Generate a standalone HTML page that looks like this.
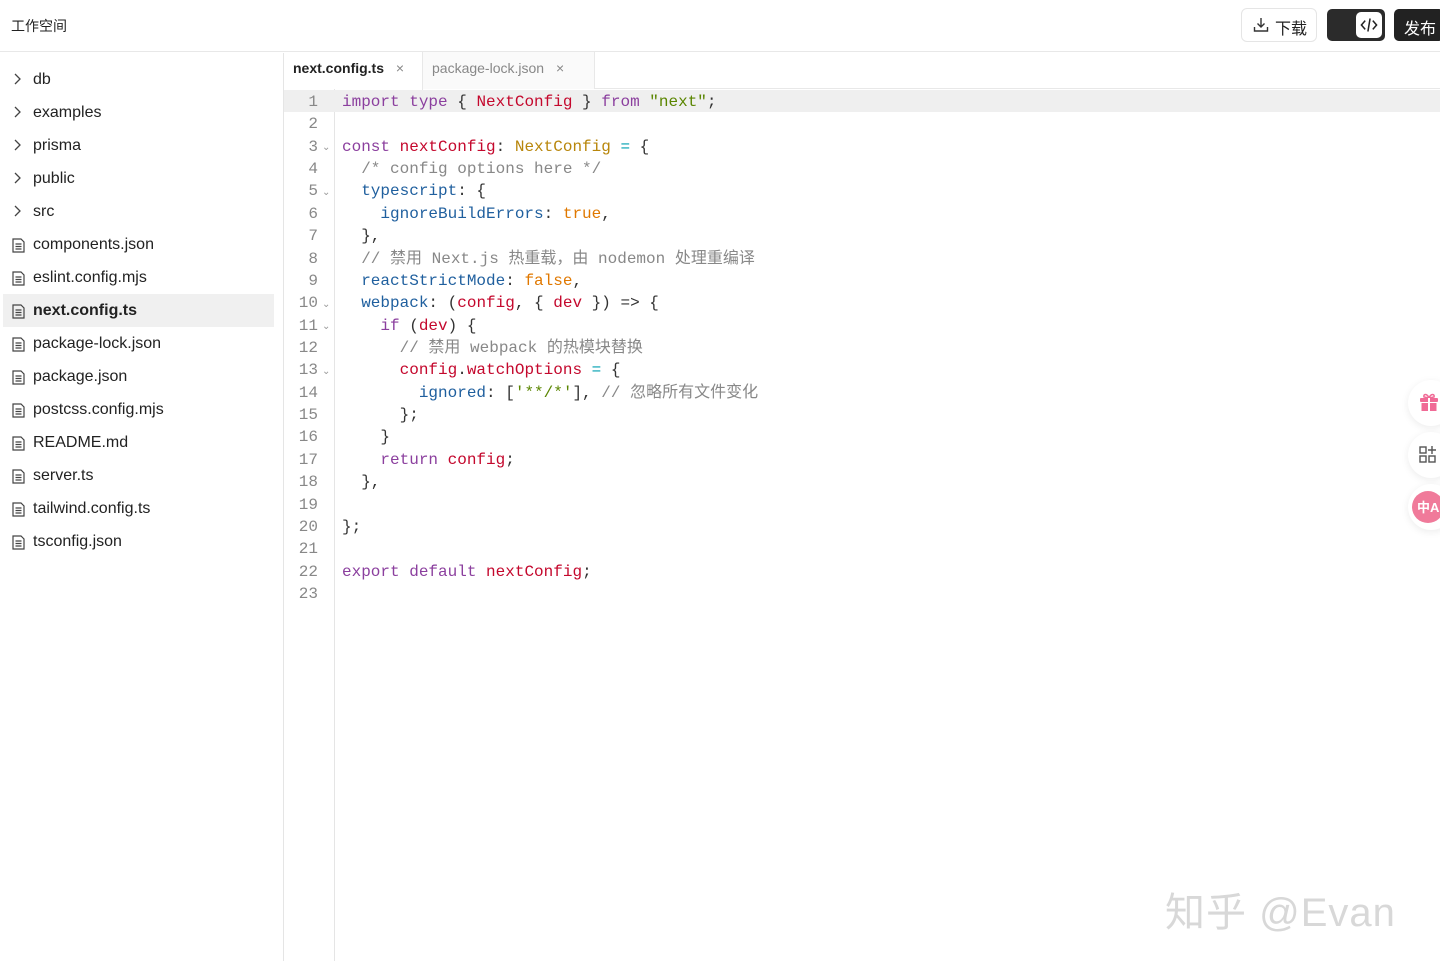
<!DOCTYPE html>
<html><head><meta charset="utf-8"><style>
*{margin:0;padding:0;box-sizing:border-box}
body{width:1440px;height:961px;overflow:hidden;background:#fff;font-family:"Liberation Sans","Noto Sans CJK SC",sans-serif;color:#222;position:relative}
.top{height:52px;border-bottom:1px solid #e8e8e8;position:relative}
.title{position:absolute;left:11px;top:16px;font-size:14px;color:#222}
.btn-dl{position:absolute;left:1241px;top:8px;width:76px;height:34px;border:1px solid #e5e5e5;border-radius:6px;font-size:16px;padding:6px 0 0 33px}
.btn-dl svg{position:absolute;left:11px;top:8px}
.tog{position:absolute;left:1327px;top:9px;width:58px;height:32px;background:#2b2b2b;border-radius:5px}
.tog span{position:absolute;right:3px;top:3px;width:26px;height:26px;background:#fff;border-radius:5px}
.pub{position:absolute;left:1394px;top:9px;width:50px;height:32px;background:#222;border-radius:5px;color:#fff;font-size:16px;padding:6px 0 0 10px}
.side{position:absolute;left:0;top:53px;width:284px;height:908px;border-right:1px solid #e5e5e5}
.item{position:absolute;left:0;height:33px;width:274px;font-size:16px;padding:8px 0 0 33px;color:#222}
.item.sel{background:#f0f0f0;font-weight:bold;left:3px;padding-left:30px;width:271px}
.item svg{position:absolute;left:12px;top:10px}
.item.sel svg{left:9px}
.tabs{position:absolute;left:284px;top:52px;height:37px;border-bottom:1px solid #e8e8e8;width:1156px}
.tab{position:absolute;top:0;height:37px;font-size:14px;padding:8px 0 0 9px}
.gut{position:absolute;left:284px;top:89px;width:51px;height:872px;border-right:1px solid #e5e5e5}
.hl{position:absolute;left:284px;top:90px;width:1156px;height:22px;background:#efefef}
.code{position:absolute;left:0;top:91px;font-family:"Liberation Mono","Noto Sans CJK SC",monospace;font-size:16px}
.ln{position:absolute;left:290px;width:28px;text-align:right;color:#888;height:22.36px;line-height:22.36px}
.cl{position:absolute;left:342px;white-space:pre;height:22.36px;line-height:22.36px;color:#333}
.fold{position:absolute;left:322px;font-size:10px;color:#999}
.k{color:#8b3f9e}.r{color:#c4082d}.g{color:#5a8500}.y{color:#b8860b}.b{color:#1f5f9e}.o{color:#e07800}.c{color:#888}.t{color:#00a0b0}
.fab{position:absolute;left:1408px;width:46px;height:46px;border-radius:23px;background:#fff;box-shadow:0 2px 8px rgba(0,0,0,.08)}
.wm{position:absolute;left:1165px;top:880px;font-size:40px;color:#d8d8d8;letter-spacing:1px}
</style></head><body>
<div class="top">
<div class="title">工作空间</div>
<div class="btn-dl"><svg width="16" height="16" viewBox="0 0 16 16" fill="none" stroke="#333" stroke-width="1.4"><path d="M8 1v9M4.5 6.5L8 10l3.5-3.5M1.5 10v4h13v-4"/></svg>下载</div>
<div class="tog"><span><svg width="26" height="26" viewBox="0 0 24 24" fill="none" stroke="#222" stroke-width="1.4"><path d="M8.5 8L5 12l3.5 4M15.5 8L19 12l-3.5 4M13 6l-2 12"/></svg></span></div>
<div class="pub">发布</div>
</div>
<div class="side">
<div class="item" style="top:10px"><svg width="10" height="12" viewBox="0 0 10 12" fill="none" stroke="#444" stroke-width="1.3"><path d="M3 1l5 5-5 5"/></svg>db</div>
<div class="item" style="top:43px"><svg width="10" height="12" viewBox="0 0 10 12" fill="none" stroke="#444" stroke-width="1.3"><path d="M3 1l5 5-5 5"/></svg>examples</div>
<div class="item" style="top:76px"><svg width="10" height="12" viewBox="0 0 10 12" fill="none" stroke="#444" stroke-width="1.3"><path d="M3 1l5 5-5 5"/></svg>prisma</div>
<div class="item" style="top:109px"><svg width="10" height="12" viewBox="0 0 10 12" fill="none" stroke="#444" stroke-width="1.3"><path d="M3 1l5 5-5 5"/></svg>public</div>
<div class="item" style="top:142px"><svg width="10" height="12" viewBox="0 0 10 12" fill="none" stroke="#444" stroke-width="1.3"><path d="M3 1l5 5-5 5"/></svg>src</div>
<div class="item" style="top:175px"><svg width="13" height="15" viewBox="0 0 13 15" fill="none" stroke="#444" stroke-width="1.2"><path d="M1 1h8l3 3v10H1zM3.5 6h6M3.5 8.5h6M3.5 11h6"/></svg>components.json</div>
<div class="item" style="top:208px"><svg width="13" height="15" viewBox="0 0 13 15" fill="none" stroke="#444" stroke-width="1.2"><path d="M1 1h8l3 3v10H1zM3.5 6h6M3.5 8.5h6M3.5 11h6"/></svg>eslint.config.mjs</div>
<div class="item sel" style="top:241px"><svg width="13" height="15" viewBox="0 0 13 15" fill="none" stroke="#444" stroke-width="1.2"><path d="M1 1h8l3 3v10H1zM3.5 6h6M3.5 8.5h6M3.5 11h6"/></svg>next.config.ts</div>
<div class="item" style="top:274px"><svg width="13" height="15" viewBox="0 0 13 15" fill="none" stroke="#444" stroke-width="1.2"><path d="M1 1h8l3 3v10H1zM3.5 6h6M3.5 8.5h6M3.5 11h6"/></svg>package-lock.json</div>
<div class="item" style="top:307px"><svg width="13" height="15" viewBox="0 0 13 15" fill="none" stroke="#444" stroke-width="1.2"><path d="M1 1h8l3 3v10H1zM3.5 6h6M3.5 8.5h6M3.5 11h6"/></svg>package.json</div>
<div class="item" style="top:340px"><svg width="13" height="15" viewBox="0 0 13 15" fill="none" stroke="#444" stroke-width="1.2"><path d="M1 1h8l3 3v10H1zM3.5 6h6M3.5 8.5h6M3.5 11h6"/></svg>postcss.config.mjs</div>
<div class="item" style="top:373px"><svg width="13" height="15" viewBox="0 0 13 15" fill="none" stroke="#444" stroke-width="1.2"><path d="M1 1h8l3 3v10H1zM3.5 6h6M3.5 8.5h6M3.5 11h6"/></svg>README.md</div>
<div class="item" style="top:406px"><svg width="13" height="15" viewBox="0 0 13 15" fill="none" stroke="#444" stroke-width="1.2"><path d="M1 1h8l3 3v10H1zM3.5 6h6M3.5 8.5h6M3.5 11h6"/></svg>server.ts</div>
<div class="item" style="top:439px"><svg width="13" height="15" viewBox="0 0 13 15" fill="none" stroke="#444" stroke-width="1.2"><path d="M1 1h8l3 3v10H1zM3.5 6h6M3.5 8.5h6M3.5 11h6"/></svg>tailwind.config.ts</div>
<div class="item" style="top:472px"><svg width="13" height="15" viewBox="0 0 13 15" fill="none" stroke="#444" stroke-width="1.2"><path d="M1 1h8l3 3v10H1zM3.5 6h6M3.5 8.5h6M3.5 11h6"/></svg>tsconfig.json</div>
</div>
<div class="tabs">
<div class="tab" style="left:0;width:139px;border-right:1px solid #e8e8e8;font-weight:bold;color:#222;background:#fff;height:38px">next.config.ts <span style="color:#888;font-weight:normal;margin-left:8px">×</span></div>
<div class="tab" style="left:139px;width:172px;border-right:1px solid #e8e8e8;color:#888;background:#fafafa">package-lock.json <span style="margin-left:8px">×</span></div>
</div>
<div class="gut"></div>
<div class="hl"></div>
<div class="code">
<div class="ln" style="top:0">1</div><div class="cl" style="top:0"><span class="k">import</span> <span class="k">type</span> { <span class="r">NextConfig</span> } <span class="k">from</span> <span class="g">"next"</span>;</div>
<div class="ln" style="top:22.36px">2</div>
<div class="ln" style="top:44.7px">3</div><div class="fold" style="top:51px">⌄</div><div class="cl" style="top:44.7px"><span class="k">const</span> <span class="r">nextConfig</span>: <span class="y">NextConfig</span> <span class="t">=</span> {</div>
<div class="ln" style="top:67.1px">4</div><div class="cl c" style="top:67.1px">  /* config options here */</div>
<div class="ln" style="top:89.4px">5</div><div class="fold" style="top:96px">⌄</div><div class="cl" style="top:89.4px">  <span class="b">typescript</span>: {</div>
<div class="ln" style="top:111.8px">6</div><div class="cl" style="top:111.8px">    <span class="b">ignoreBuildErrors</span>: <span class="o">true</span>,</div>
<div class="ln" style="top:134.2px">7</div><div class="cl" style="top:134.2px">  },</div>
<div class="ln" style="top:156.5px">8</div><div class="cl c" style="top:156.5px">  // 禁用 Next.js 热重载，由 nodemon 处理重编译</div>
<div class="ln" style="top:178.9px">9</div><div class="cl" style="top:178.9px">  <span class="b">reactStrictMode</span>: <span class="o">false</span>,</div>
<div class="ln" style="top:201.2px">10</div><div class="fold" style="top:208px">⌄</div><div class="cl" style="top:201.2px">  <span class="b">webpack</span>: (<span class="r">config</span>, { <span class="r">dev</span> }) =&gt; {</div>
<div class="ln" style="top:223.6px">11</div><div class="fold" style="top:230px">⌄</div><div class="cl" style="top:223.6px">    <span class="k">if</span> (<span class="r">dev</span>) {</div>
<div class="ln" style="top:246px">12</div><div class="cl c" style="top:246px">      // 禁用 webpack 的热模块替换</div>
<div class="ln" style="top:268.3px">13</div><div class="fold" style="top:275px">⌄</div><div class="cl" style="top:268.3px">      <span class="r">config</span>.<span class="r">watchOptions</span> <span class="t">=</span> {</div>
<div class="ln" style="top:290.7px">14</div><div class="cl" style="top:290.7px">        <span class="b">ignored</span>: [<span class="g">'**/*'</span>], <span class="c">// 忽略所有文件变化</span></div>
<div class="ln" style="top:313px">15</div><div class="cl" style="top:313px">      };</div>
<div class="ln" style="top:335.4px">16</div><div class="cl" style="top:335.4px">    }</div>
<div class="ln" style="top:357.8px">17</div><div class="cl" style="top:357.8px">    <span class="k">return</span> <span class="r">config</span>;</div>
<div class="ln" style="top:380.1px">18</div><div class="cl" style="top:380.1px">  },</div>
<div class="ln" style="top:402.5px">19</div>
<div class="ln" style="top:424.8px">20</div><div class="cl" style="top:424.8px">};</div>
<div class="ln" style="top:447.2px">21</div>
<div class="ln" style="top:469.6px">22</div><div class="cl" style="top:469.6px"><span class="k">export</span> <span class="k">default</span> <span class="r">nextConfig</span>;</div>
<div class="ln" style="top:491.9px">23</div>
</div>
<div class="fab" style="top:380px"><svg style="position:absolute;left:11px;top:12px" width="20" height="20" viewBox="0 0 20 20" fill="#f06a96"><rect x="1" y="6" width="18" height="4" rx="1"/><rect x="2.5" y="11" width="15" height="8"/><path d="M10 6C8 1 4 2 5 5zM10 6c2-5 6-4 5-1z" fill="none" stroke="#f06a96" stroke-width="1.5"/><rect x="9" y="6" width="2" height="13" fill="#fff"/></svg></div>
<div class="fab" style="top:432px"><svg style="position:absolute;left:11px;top:13px" width="20" height="20" viewBox="0 0 20 20" fill="none" stroke="#555" stroke-width="1.4"><rect x="1" y="2" width="6" height="6"/><rect x="1" y="11" width="6" height="6"/><rect x="10" y="11" width="6" height="6"/><path d="M13 1v8M9 5h8"/></svg></div>
<div class="fab" style="top:484px"><div style="position:absolute;left:4px;top:7px;width:32px;height:32px;border-radius:16px;background:#f07a9a;color:#fff;font-size:13px;padding:6px 0 0 5px;font-weight:bold">中A</div></div>
<div class="wm">知乎 @Evan</div>
</body></html>
